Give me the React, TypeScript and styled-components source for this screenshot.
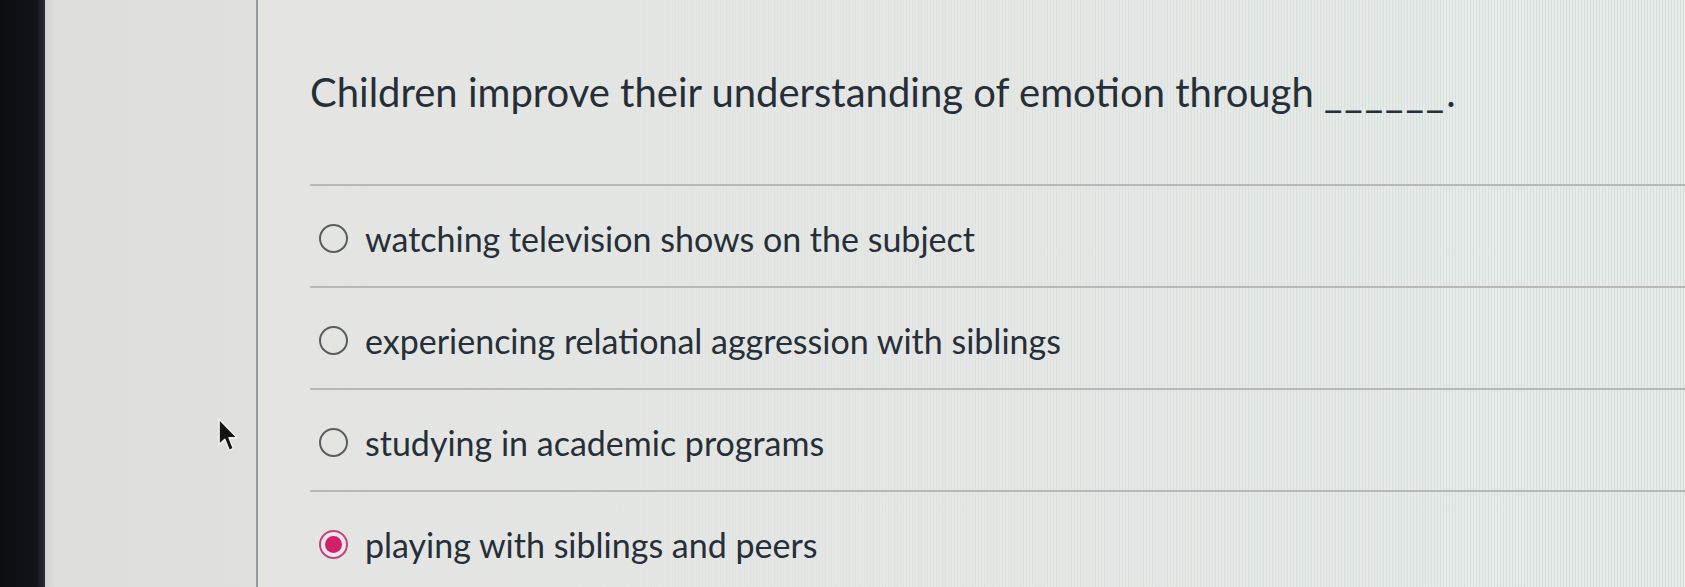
import * as React from 'react'
import styled, { createGlobalStyle } from 'styled-components'

type Choice = {
  id: string
  label: string
  selected?: boolean
}

const choices: Choice[] = [
  { id: 'a', label: 'watching television shows on the subject' },
  { id: 'b', label: 'experiencing relational aggression with siblings' },
  { id: 'c', label: 'studying in academic programs' },
  { id: 'd', label: 'playing with siblings and peers', selected: true },
]

const GlobalStyle = createGlobalStyle`
  html, body {
    margin: 0;
    padding: 0;
    background: #e3e4e2;
  }
  body {
    font-family: Lato, "Open Sans", sans-serif;
    color: #262f38;
  }
`

const Pointer = () => (
  <CursorWrap>
    <svg width="24" height="38" viewBox="0 0 18 30">
      <path
        d="M2 1 L2 21 L6.5 16.8 L10 25.5 L13.2 24 L9.8 15.6 L16 15.4 Z"
        fill="#141414"
        stroke="#f2f2f2"
        strokeWidth="1.1"
        strokeLinejoin="round"
      />
    </svg>
  </CursorWrap>
)

const Radio = (props: { checked?: boolean }) => (
  <RadioRing checked={props.checked}>{props.checked && <RadioDot />}</RadioRing>
)

export default function App() {
  return (
    <>
      <GlobalStyle />
      <Screen>
        <Bezel />
        <Sidebar>
          <Pointer />
        </Sidebar>
        <Main>
          <Question>
            Children improve their understanding of emotion through <Blank>______</Blank>.
          </Question>
          <Answers>
            {choices.map(choice => (
              <Answer key={choice.id}>
                <Radio checked={choice.selected} />
                <AnswerText>{choice.label}</AnswerText>
              </Answer>
            ))}
          </Answers>
        </Main>
      </Screen>
    </>
  )
}

const Screen = styled.div`
  display: flex;
  width: 1685px;
  height: 587px;
  overflow: hidden;
`

const Bezel = styled.div`
  flex: 0 0 45px;
  background: linear-gradient(to right, #0b0d10 0%, #111418 80%, #2a2d31 100%);
`

const Sidebar = styled.div`
  position: relative;
  flex: 0 0 211px;
  background: linear-gradient(to right, #cfd0cf 0px, #dddedc 10px, #e0e1df 100%);
  border-right: 2px solid #959a9e;
`

const CursorWrap = styled.div`
  position: absolute;
  left: 171px;
  top: 418px;
  filter: blur(0.4px);
`

const Main = styled.div`
  flex: 1;
  padding: 68px 0 0 52px;
  background:
    linear-gradient(to right, #e4e5e3 0%, rgba(228, 229, 227, 0.6) 55%, rgba(228, 229, 227, 0) 90%),
    repeating-linear-gradient(
      90deg,
      rgba(190, 222, 218, 0.55) 0px,
      rgba(190, 222, 218, 0.55) 1px,
      rgba(240, 240, 238, 0.4) 1px,
      rgba(240, 240, 238, 0.4) 3px
    ),
    #e6e7e5;
`

const Question = styled.div`
  font-size: 40px;
  line-height: 48px;
  color: #262f38;
  padding-bottom: 68px;
`

const Blank = styled.span`
  letter-spacing: 2px;
`

const Answers = styled.div`
  display: flex;
  flex-direction: column;
`

const Answer = styled.div`
  box-sizing: border-box;
  display: flex;
  align-items: center;
  gap: 17px;
  height: 102px;
  padding: 4px 0 0 9px;
  border-top: 2px solid #b6b7b6;
`

const AnswerText = styled.span`
  font-size: 34px;
  color: #262f38;
`

const RadioRing = styled.span<{ checked?: boolean }>`
  box-sizing: border-box;
  display: flex;
  align-items: center;
  justify-content: center;
  width: 29px;
  height: 29px;
  border-radius: 50%;
  border: 2px solid ${p => (p.checked ? '#b9487f' : '#5a5d60')};
  background: ${p => (p.checked ? '#f4e6ee' : 'transparent')};
`

const RadioDot = styled.span`
  width: 17px;
  height: 17px;
  border-radius: 50%;
  background: #d0216b;
`
